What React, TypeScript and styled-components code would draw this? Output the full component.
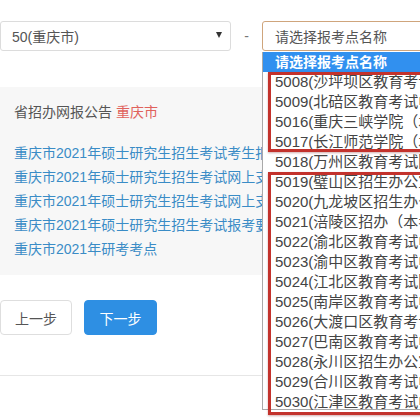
import React from "react";
import styled, { createGlobalStyle } from "styled-components";

const Global = createGlobalStyle`
  html, body { margin: 0; padding: 0; background: #fff; overflow: hidden; }
  body {
    width: 420px; height: 420px;
    font-family: "Liberation Sans", "Noto Sans CJK SC", sans-serif;
    font-size: 14px; color: #555;
  }
`;

const Page = styled.div`
  position: relative;
  width: 420px;
  height: 420px;
  overflow: hidden;
`;

const FormRow = styled.div`
  display: flex;
  align-items: center;
  padding-top: 21px;
  height: 30px;
`;

const SelectBox = styled.div<{ $focused?: boolean; $w: number }>`
  box-sizing: border-box;
  width: ${(p) => p.$w}px;
  flex: none;
  height: 30px;
  border: 1px solid ${(p) => (p.$focused ? "#cfa57c" : "#dcdcdc")};
  border-radius: 3px;
  display: flex;
  align-items: center;
  justify-content: space-between;
  padding: 0 8px 0 ${(p) => (p.$focused ? 12 : 11)}px;
  font-size: 14px;
  color: #555;
  background: #fff;
  white-space: nowrap;
`;

const Caret = styled.span`
  width: 0;
  height: 0;
  border-left: 3.5px solid transparent;
  border-right: 3.5px solid transparent;
  border-top: 6px solid #333;
  margin-top: -2px;
`;

const Dash = styled.span`
  width: 31px;
  text-align: center;
  color: #777;
  flex: none;
`;

const Notice = styled.div`
  margin-top: 36px;
  background: #f7f7f7;
  padding: 15px 14px 14px;
  height: 159px;
`;

const Title = styled.div`
  line-height: 20px;
  color: #555;
  margin-bottom: 19px;
  white-space: nowrap;
`;

const Red = styled.span`
  color: #e0625c;
`;

const LinkItem = styled.a`
  display: block;
  line-height: 24px;
  color: #3a8cc6;
  text-decoration: none;
  white-space: nowrap;
`;

const Buttons = styled.div`
  display: flex;
  gap: 12px;
  margin-top: 25px;
`;

const Btn = styled.button<{ $primary?: boolean }>`
  box-sizing: border-box;
  height: 35px;
  width: ${(p) => (p.$primary ? 73 : 72)}px;
  border-radius: 4px;
  border: 1px solid ${(p) => (p.$primary ? "#2e8fe3" : "#dedede")};
  background: ${(p) => (p.$primary ? "#2e8fe3" : "#fff")};
  color: ${(p) => (p.$primary ? "#fff" : "#555")};
  font-family: inherit;
  font-size: 14px;
  padding: 0;
`;

const Rule = styled.hr`
  margin: 40px 0 0;
  border: none;
  border-top: 1px solid #e6e6e6;
`;

const Dropdown = styled.div`
  position: absolute;
  left: 262px;
  top: 52px;
  width: 260px;
  height: 358px;
  box-sizing: border-box;
  border-left: 1px solid #a9a9a9;
  border-bottom: 1px solid #a9a9a9;
  background: #fff;
`;

const Option = styled.div<{ $selected?: boolean }>`
  height: 20px;
  line-height: 20px;
  padding-left: 12px;
  font-size: ${(p) => (p.$selected ? 14 : 15)}px;
  white-space: nowrap;
  background: ${(p) => (p.$selected ? "#3190ef" : "transparent")};
  color: ${(p) => (p.$selected ? "#fff" : "#444")};
  font-weight: ${(p) => (p.$selected ? 700 : 400)};
`;

const Marked = styled.div<{ $extend?: number }>`
  position: relative;
  &::after {
    content: "";
    position: absolute;
    left: 5px;
    right: -10px;
    top: 0;
    bottom: ${(p) => -(p.$extend ?? 0)}px;
    border: 3px solid #c3322c;
    border-right: none;
    box-shadow: 0 1px 2px rgba(120, 20, 20, 0.35);
    pointer-events: none;
  }
`;

const group1 = [
  "5008(沙坪坝区教育考试中心）",
  "5009(北碚区教育考试中心）",
  "5016(重庆三峡学院（本校）",
  "5017(长江师范学院（本校）",
];
const single = "5018(万州区教育考试院）";
const group2 = [
  "5019(璧山区招生办公室）",
  "5020(九龙坡区招生办公室）",
  "5021(涪陵区招办（本考点）",
  "5022(渝北区教育考试中心）",
  "5023(渝中区教育考试中心）",
  "5024(江北区教育考试院）",
  "5025(南岸区教育考试中心）",
  "5026(大渡口区教育考试中心）",
  "5027(巴南区教育考试中心）",
  "5028(永川区招生办公室）",
  "5029(合川区教育考试中心）",
  "5030(江津区教育考试中心）",
];

const links = [
  "重庆市2021年硕士研究生招生考试考生报名须知",
  "重庆市2021年硕士研究生招生考试网上支付须知",
  "重庆市2021年硕士研究生招生考试网上支付说明",
  "重庆市2021年硕士研究生招生考试报考要求",
  "重庆市2021年研考考点",
];

export default function App() {
  return (
    <Page>
      <Global />
      <FormRow>
        <SelectBox $w={231}>
          <span>50(重庆市)</span>
          <Caret />
        </SelectBox>
        <Dash>-</Dash>
        <SelectBox $w={200} $focused>
          <span>请选择报考点名称</span>
        </SelectBox>
      </FormRow>
      <Notice>
        <Title>
          省招办网报公告 <Red>重庆市</Red>
        </Title>
        {links.map((l) => (
          <LinkItem key={l} href="#">
            {l}
          </LinkItem>
        ))}
      </Notice>
      <Buttons>
        <Btn>上一步</Btn>
        <Btn $primary>下一步</Btn>
      </Buttons>
      <Rule />
      <Dropdown>
        <Option $selected>请选择报考点名称</Option>
        <Marked>
          {group1.map((o) => (
            <Option key={o}>{o}</Option>
          ))}
        </Marked>
        <Option>{single}</Option>
        <Marked $extend={3}>
          {group2.map((o) => (
            <Option key={o}>{o}</Option>
          ))}
        </Marked>
      </Dropdown>
    </Page>
  );
}
